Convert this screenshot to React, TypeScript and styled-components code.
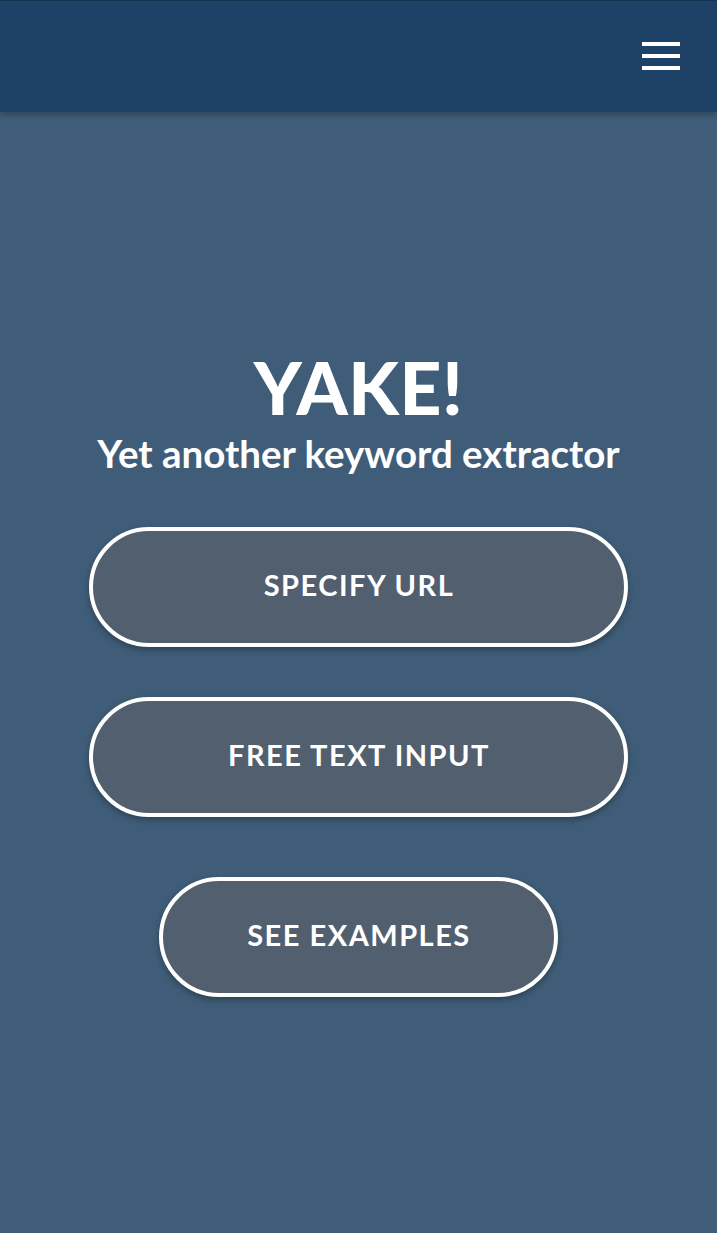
import React from "react";
import styled, { createGlobalStyle } from "styled-components";

const GlobalStyle = createGlobalStyle`
    html, body {
        margin: 0;
        padding: 0;
        background: #3f5d78;
    }
    body {
        font-family: "Lato", "Open Sans", sans-serif;
        color: white;
    }
`;

const Page = styled.div`
    min-height: 1233px;
    display: flex;
    flex-direction: column;
    background: #3f5d78;
`;

const Header = styled.header`
    height: 112px;
    background: #1e4168;
    border-top: 1px solid #163352;
    box-sizing: border-box;
    box-shadow: 0 3px 6px 0 hsla(0, 0%, 0%, 0.25);
    display: flex;
    align-items: center;
    justify-content: flex-end;
    padding: 0 37px 0 0;
    position: relative;
    z-index: 1;
`;

const MenuButton = styled.button`
    background: none;
    border: none;
    padding: 0;
    margin-top: -1px;
    width: 38px;
    height: 28px;
    display: flex;
    flex-direction: column;
    justify-content: space-between;
    cursor: pointer;
`;

const MenuBar = styled.span`
    display: block;
    height: 4px;
    width: 100%;
    background: white;
`;

const Main = styled.main`
    display: flex;
    flex-direction: column;
    align-items: center;
    padding-top: 237px;
`;

const Title = styled.h1`
    margin: 0;
    font-size: 73px;
    line-height: 76px;
    font-weight: 900;
    letter-spacing: 0.5px;
`;

const Subtitle = styled.h2`
    margin: 6px 0 0 0;
    font-size: 38.5px;
    line-height: 44px;
    font-weight: 700;
`;

const ButtonList = styled.div`
    display: flex;
    flex-direction: column;
    align-items: center;
    margin-top: 52px;
`;

const PillButton = styled.button<{ $wide?: boolean; $gap: number }>`
    width: ${p => (p.$wide ? 539 : 399)}px;
    height: 120px;
    margin-top: ${p => p.$gap}px;
    padding: 0 0 6px 1px;
    box-sizing: border-box;
    border: 4px solid white;
    border-radius: 60px;
    background: #525f6e;
    color: white;
    font-family: "Lato", "Open Sans", sans-serif;
    font-weight: 700;
    font-size: 29px;
    letter-spacing: 1.5px;
    box-shadow: 0 3px 6px 0 hsla(0, 0%, 0%, 0.3);
    cursor: pointer;
`;

const buttons = [
    { label: "SPECIFY URL", wide: true, gap: 0 },
    { label: "FREE TEXT INPUT", wide: true, gap: 50 },
    { label: "SEE EXAMPLES", wide: false, gap: 60 },
];

export default function App() {
    return (
        <Page>
            <GlobalStyle />
            <Header>
                <MenuButton aria-label="menu">
                    <MenuBar />
                    <MenuBar />
                    <MenuBar />
                </MenuButton>
            </Header>
            <Main>
                <Title>YAKE!</Title>
                <Subtitle>Yet another keyword extractor</Subtitle>
                <ButtonList>
                    {buttons.map(b => (
                        <PillButton key={b.label} $wide={b.wide} $gap={b.gap}>
                            {b.label}
                        </PillButton>
                    ))}
                </ButtonList>
            </Main>
        </Page>
    );
}
